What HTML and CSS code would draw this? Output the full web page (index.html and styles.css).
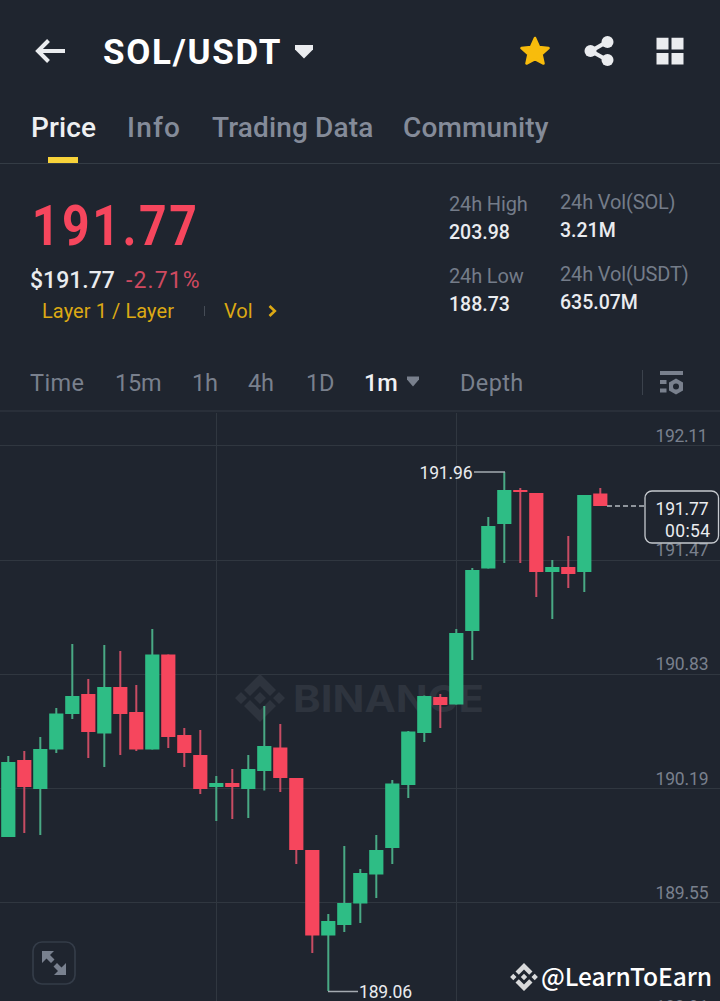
FILE: index.html
```html
<!DOCTYPE html>
<html lang="en">
<head>
<meta charset="utf-8">
<title>SOL/USDT</title>
<link rel="stylesheet" href="styles.css">
</head>
<body>
<div class="app">
  <header class="header">
    <svg class="back" width="32" height="26" viewBox="0 0 32 26"><path d="M31 13H4M14.500 2.500L4 13l10.500 10.500" fill="none" stroke="#eaecef" stroke-width="4"/></svg>
    <h1 class="pair">SOL/USDT</h1>
    <svg class="caret" width="20" height="15" viewBox="0 0 20 15"><path d="M1 1h18v4.500L10 14.500 1 5.500z" fill="#eaecef"/></svg>
    <div class="actions">
      <svg width="32" height="32" viewBox="0 0 32 32"><path d="M16 3l4 9 9.500 1-7 6.300 2 9.200-8.500-4.300L7.500 28.500l2-9.200-7-6.300 9.500-1z" fill="#f8bc0c" stroke="#f8bc0c" stroke-width="2.600" stroke-linejoin="round"/></svg>
      <svg width="32" height="32" viewBox="0 0 32 32"><path d="M24.500 6.500L8 16l16.500 9.200" fill="none" stroke="#eaecef" stroke-width="4"/><g fill="#eaecef"><circle cx="24.500" cy="7" r="6"/><circle cx="7.500" cy="16" r="6"/><circle cx="24.500" cy="25" r="6"/></g></svg>
      <svg width="28" height="28" viewBox="0 0 28 28"><path d="M.5.800h12v11.700H.5zM15.500.800h12v11.700h-12zM.5 16h12v11.500H.5zM15.500 16h12v11.500h-12z" fill="#eaecef"/></svg>
    </div>
  </header>
  <nav class="tabs">
    <a class="tab tab-price active">Price</a>
    <a class="tab tab-info">Info</a>
    <a class="tab tab-data">Trading Data</a>
    <a class="tab tab-community">Community</a>
  </nav>
  <section class="summary">
    <div class="quote">
      <div class="last">191.77</div>
      <div class="sub"><span class="fiat">$191.77</span><span class="change">-2.71%</span></div>
      <div class="tags"><span class="tag-layer">Layer 1 / Layer</span><i class="tag-sep"></i><span class="tag-vol">Vol</span><svg width="10" height="14" viewBox="0 0 10 14"><path d="M1.500 2L6.800 7l-5.300 5" fill="none" stroke="#dca914" stroke-width="2.600"/></svg></div>
    </div>
    <dl class="stats col-a">
      <dt>24h High</dt><dd>203.98</dd>
      <dt>24h Low</dt><dd>188.73</dd>
    </dl>
    <dl class="stats col-b">
      <dt>24h Vol(SOL)</dt><dd>3.21M</dd>
      <dt>24h Vol(USDT)</dt><dd>635.07M</dd>
    </dl>
  </section>
  <nav class="frames">
    <a class="wide">Time</a><a>15m</a><a>1h</a><a>4h</a><a>1D</a>
    <a class="current">1m<svg width="14" height="11" viewBox="0 0 14 11"><path d="M1 .500h12v3L7 10.500 1 3.500z" fill="#79808d"/></svg></a>
    <a class="wide">Depth</a>
    <i class="rule"></i>
    <svg width="26" height="26" viewBox="0 0 26 26"><g fill="#79808d"><path d="M1 1h23v4H1zM1 10h6.500v4H1zM1 18.500h6.500v4H1z"/><path fill-rule="evenodd" d="M17 8.500l7 4v8l-7 4-7-4v-8zM17 13.500a3 3 0 1 0 0 6 3 3 0 0 0 0-6z"/></g></svg>
  </nav>
  <main class="chart">
    <svg id="plot" width="720" height="589" viewBox="0 412 720 589">
      <g stroke="#303740" stroke-width="1">
        <path d="M0 445.500H720M0 560.500H720M0 674.500H720M0 788.500H720M0 902.500H720M216.500 413V1001M456.500 413V1001"/>
      </g>
      <g class="mark" fill="#2e343e">
        <path d="M260 674l16 16-6 6-10-10-10 10-6-6zM260 722l16-16-6-6-10 10-10-10-6 6zM260 692l6 6-6 6-6-6zM241 692l6 6-6 6-6-6zM279 692l6 6-6 6-6-6z"/>
        <text x="293" y="712" textLength="191" lengthAdjust="spacingAndGlyphs">BINANCE</text>
      </g>
      <g id="candles"></g>
      <path d="M474 472H505M328 991.500H358" stroke="#a4aab1" stroke-width="1.600"/>
      <path d="M607 506H645" stroke="#b5bac1" stroke-width="1.500" stroke-dasharray="5 3"/>
      <g class="axis">
        <text x="655.500" y="442" textLength="52">192.11</text>
        <text x="655.500" y="556" textLength="53">191.47</text>
        <text x="655.500" y="670" textLength="53">190.83</text>
        <text x="655.500" y="785" textLength="53">190.19</text>
        <text x="655.500" y="899" textLength="53">189.55</text>
        <text x="655.500" y="1013" textLength="53">188.91</text>
      </g>
      <rect x="645" y="491" width="73.500" height="52" rx="7" fill="#1f252f" stroke="#c5c9ce" stroke-width="1.300"/>
      <g class="callout">
        <text x="655.500" y="515" textLength="53">191.77</text>
        <text x="665" y="537" textLength="45">00:54</text>
        <text x="419.500" y="479" textLength="53">191.96</text>
        <text x="359" y="998" textLength="53">189.06</text>
      </g>
      <rect x="33" y="942" width="42" height="42" rx="9" fill="none" stroke="#343c48" stroke-width="1.700"/>
      <path d="M42 951h12l-4 4 4.500 4.500-3.500 3.500-4.500-4.500-4.500 4.500zM66 975H54l4-4-4.500-4.500 3.500-3.500 4.500 4.500L66 963z" fill="#79818f"/>
      <g class="credit">
        <path d="M524 963l8.500 8.500-3.300 3.300-5.200-5.200-5.200 5.200-3.300-3.300zM524 991l8.500-8.500-3.300-3.300-5.200 5.200-5.200-5.200-3.300 3.300zM524 973.800l3.200 3.200-3.200 3.200-3.200-3.200zM513.300 973.800l3.200 3.200-3.200 3.200-3.200-3.200zM534.700 973.800l3.200 3.200-3.200 3.200-3.200-3.200z" fill="#d9dadb"/>
        <text x="541" y="985.500" textLength="171">@LearnToEarn</text>
      </g>
    </svg>
  </main>
</div>
<script src="chart.js"></script>
</body>
</html>
```

FILE: styles.css
```css
* { box-sizing: border-box; margin: 0; padding: 0; }
body { background: #1f252f; color: #eaecef; font-family: Roboto, "Liberation Sans", sans-serif; overflow: hidden; }
svg { display: block; flex: none; }
.app { width: 720px; height: 1001px; display: flex; flex-direction: column; overflow: hidden; }

.header { height: 102px; display: flex; align-items: center; padding: 0 36px 0 34px; flex: none; }
.pair { margin-left: 37px; margin-top: 4px; width: 177px; font-size: 35px; line-height: 40px; font-weight: 700; letter-spacing: 1.700px; color: #fff; white-space: nowrap; }
.caret { margin-left: 14px; }
.actions { margin-left: auto; display: flex; align-items: center; }
.actions svg + svg { margin-left: 32px; }
.actions svg:last-child { margin-left: 41px; }

.tabs { height: 62px; flex: none; display: grid; grid-template-columns: 96px 85px 191px 160px; padding-left: 31px; border-bottom: 1px solid #343c45; }
.tab { color: #848b99; font-size: 28px; line-height: 51px; font-weight: 500; white-space: nowrap; letter-spacing: .150px; }
.tab-info { letter-spacing: 1.200px; }
.tab.active { color: #eef0f2; display: flex; flex-direction: column; }
.tab.active::after { content: ""; width: 30px; height: 6px; margin: 4px 0 0 17px; background: #f8d33a; }

.summary { height: 188px; flex: none; display: grid; grid-template-columns: 418px 111px 160px; padding-left: 31px; white-space: nowrap; }
.last { margin-top: 32px; width: 190px; font-size: 56px; line-height: 60px; font-weight: 700; color: #f6465d; letter-spacing: 3px; transform: scaleX(.86); transform-origin: 0 0; padding-left: 1px; }
.sub { display: flex; margin-top: 11px; font-size: 23px; line-height: 28px; font-weight: 500; }
.fiat { width: 96px; margin-left: -1px; }
.change { color: #cf4a60; font-weight: 400; letter-spacing: 1.100px; }
.tags { display: flex; align-items: center; padding-left: 11px; margin-top: 4px; color: #dca914; font-size: 20px; line-height: 24px; letter-spacing: .080px; }
.tag-layer { width: 162px; }
.tag-sep { width: 1px; height: 10px; background: #454c56; }
.tag-vol { width: 44px; margin-left: 19px; }
.stats { font-size: 20px; line-height: 28px; }
.col-a { padding-top: 26px; }
.col-b { padding-top: 24px; }
.stats dt { color: #747c89; letter-spacing: -.150px; height: 28px; }
.stats dd { color: #eaecef; font-size: 19.500px; font-weight: 500; padding-top: 1px; margin-bottom: 15px; }

.frames { height: 60px; flex: none; display: grid; grid-template-columns: 85px 77px 56px 58px 58px 96px 182px 17px 26px; align-items: center; padding: 3px 0 0 30px; border-bottom: 2px solid #292f39; color: #79808d; font-size: 23.500px; }
.frames a { white-space: nowrap; letter-spacing: -.200px; }
.frames .wide { letter-spacing: .400px; }
.frames .current { color: #f0f1f3; font-weight: 500; display: flex; align-items: center; gap: 9px; }
.frames .current svg { margin-top: -3px; }
.rule { width: 1px; height: 25px; background: #3b424c; }

.chart { flex: 1; min-height: 0; }
.mark text { font: 700 37px Inter, sans-serif; }
.axis { font: 400 17.500px Roboto, sans-serif; fill: #79808d; }
.callout { font: 400 17.500px Roboto, sans-serif; fill: #eaecef; }
.credit text { font: 500 24.500px "Noto Sans CJK SC", "Noto Sans", sans-serif; fill: #fff; }
.up { fill: #2ebd85; }
.down { fill: #f6465d; }
.wick-up { fill: #49a984; }
.wick-down { fill: #c84c63; }
```

FILE: chart.js
```js
// Each candle: direction, high, body top, body bottom, low.
const candles = [
  ["up", 756, 762, 837, 837], ["down", 751, 760, 787, 833], ["up", 737, 749, 789, 835],
  ["up", 708, 713.5, 749.5, 753], ["up", 644, 696, 714, 719], ["down", 679, 694, 732, 758],
  ["up", 645, 687, 733.5, 767], ["down", 651, 687, 714, 755], ["down", 685, 712, 749.5, 751],
  ["up", 629, 654.5, 749.5, 749.5], ["down", 654.5, 654.5, 737, 748], ["down", 728, 735, 753, 767],
  ["down", 730, 755, 789, 794], ["up", 776, 783, 787, 821], ["down", 769, 783, 787, 819],
  ["up", 755, 769, 789, 818], ["up", 706, 746, 771, 790.5], ["down", 724, 747.5, 778, 792],
  ["down", 778, 778, 850, 864], ["down", 850, 850, 935.5, 953], ["up", 914, 921, 935.5, 991],
  ["up", 846, 903, 925, 932], ["up", 869, 873, 903.5, 923], ["up", 835, 850, 874.5, 898],
  ["up", 780, 783.5, 848, 864], ["up", 731, 731.5, 785, 798], ["up", 695.5, 696, 733, 742],
  ["down", 694, 697, 705, 728], ["up", 629, 633, 704.5, 704.5], ["up", 568, 570, 631, 660],
  ["up", 517, 526, 568.5, 568.5], ["up", 472, 490, 524, 563], ["down", 488, 490, 492, 563],
  ["down", 493, 493, 572, 597], ["up", 560, 567, 572, 619], ["down", 536, 567, 574, 588],
  ["up", 495, 495, 572, 592], ["down", 488, 493.5, 506, 506]
];
const layer = document.getElementById("candles");
function rect(cls, x, y, w, h) {
  const r = document.createElementNS("http://www.w3.org/2000/svg", "rect");
  for (const [k, v] of Object.entries({ class: cls, x, y, width: w, height: h })) r.setAttribute(k, v);
  layer.appendChild(r);
}
candles.forEach(([dir, high, top, bottom, low], i) => {
  const cx = 8.3 + i * 16;
  rect("wick-" + dir, cx - 1, high, 2, low - high);
  rect(dir, cx - 7.1, top, 14.2, bottom - top);
});
```
